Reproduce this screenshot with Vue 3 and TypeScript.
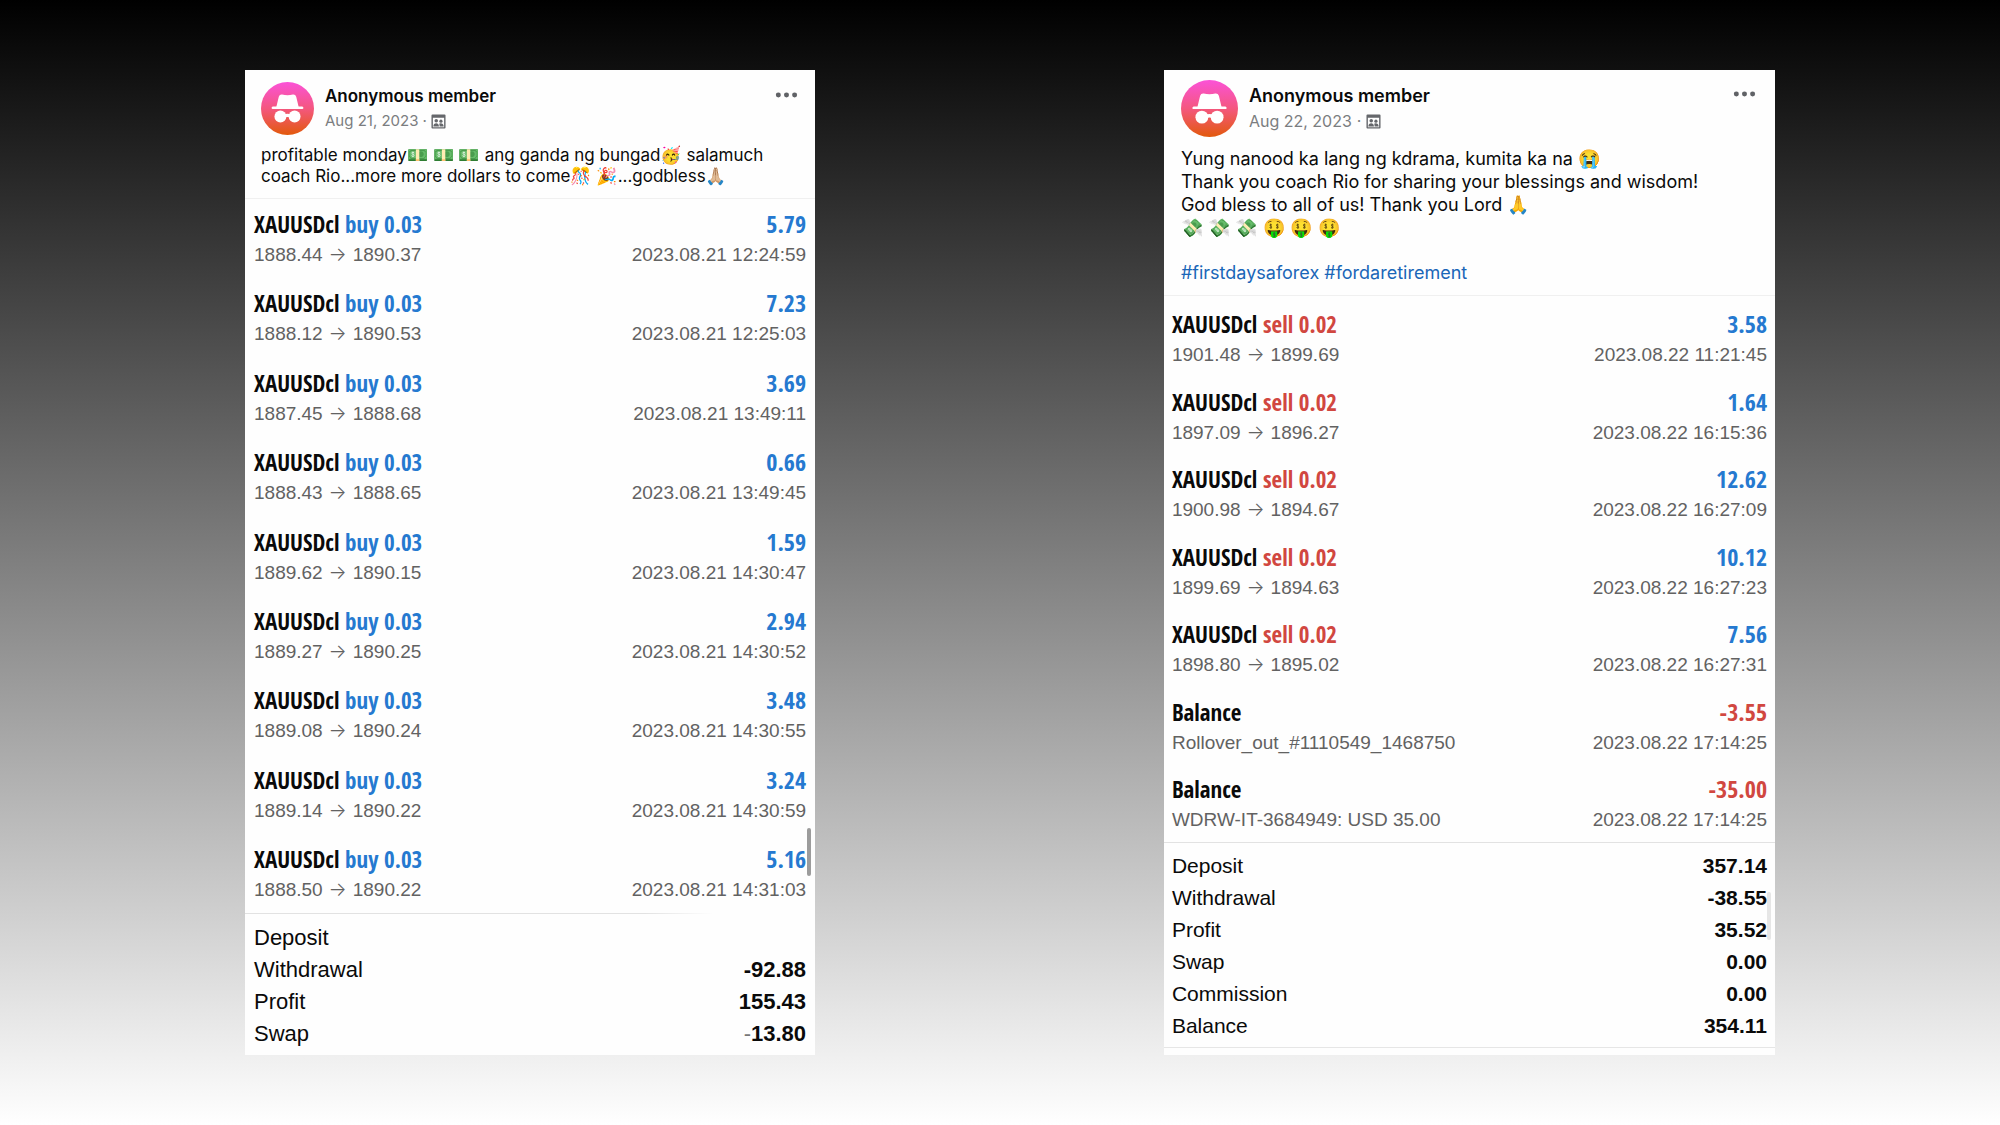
<script setup lang="ts">
interface Trade {
  name: string
  action?: string
  side?: 'buy' | 'sell'
  detail: string[]
  amount: string
  time: string
}

interface Total {
  label: string
  value: string
  faintSign?: boolean
}

interface Post {
  id: string
  variant: 'compact' | 'roomy'
  author: string
  date: string
  lines: string[]
  tags: string[]
  trades: Trade[]
  totals: Total[]
}

const buy = (from: string, to: string, amount: string, time: string): Trade => ({
  name: 'XAUUSDcl',
  action: 'buy 0.03',
  side: 'buy',
  detail: [from, to],
  amount,
  time: `2023.08.21 ${time}`,
})

const sell = (from: string, to: string, amount: string, time: string): Trade => ({
  name: 'XAUUSDcl',
  action: 'sell 0.02',
  side: 'sell',
  detail: [from, to],
  amount,
  time: `2023.08.22 ${time}`,
})

const posts: Post[] = [
  {
    id: 'aug21',
    variant: 'compact',
    author: 'Anonymous member',
    date: 'Aug 21, 2023',
    lines: [
      'profitable monday💵 💵 💵 ang ganda ng bungad🥳 salamuch',
      'coach Rio...more more dollars to come🎊 🎉...godbless🙏🏼',
    ],
    tags: [],
    trades: [
      buy('1888.44', '1890.37', '5.79', '12:24:59'),
      buy('1888.12', '1890.53', '7.23', '12:25:03'),
      buy('1887.45', '1888.68', '3.69', '13:49:11'),
      buy('1888.43', '1888.65', '0.66', '13:49:45'),
      buy('1889.62', '1890.15', '1.59', '14:30:47'),
      buy('1889.27', '1890.25', '2.94', '14:30:52'),
      buy('1889.08', '1890.24', '3.48', '14:30:55'),
      buy('1889.14', '1890.22', '3.24', '14:30:59'),
      buy('1888.50', '1890.22', '5.16', '14:31:03'),
    ],
    totals: [
      { label: 'Deposit', value: '' },
      { label: 'Withdrawal', value: '-92.88' },
      { label: 'Profit', value: '155.43' },
      { label: 'Swap', value: '-13.80', faintSign: true },
    ],
  },
  {
    id: 'aug22',
    variant: 'roomy',
    author: 'Anonymous member',
    date: 'Aug 22, 2023',
    lines: [
      'Yung nanood ka lang ng kdrama, kumita ka na 😭',
      'Thank you coach Rio for sharing your blessings and wisdom!',
      'God bless to all of us! Thank you Lord 🙏',
      '💸 💸 💸 🤑 🤑 🤑',
    ],
    tags: ['#firstdaysaforex', '#fordaretirement'],
    trades: [
      sell('1901.48', '1899.69', '3.58', '11:21:45'),
      sell('1897.09', '1896.27', '1.64', '16:15:36'),
      sell('1900.98', '1894.67', '12.62', '16:27:09'),
      sell('1899.69', '1894.63', '10.12', '16:27:23'),
      sell('1898.80', '1895.02', '7.56', '16:27:31'),
      { name: 'Balance', detail: ['Rollover_out_#1110549_1468750'], amount: '-3.55', time: '2023.08.22 17:14:25' },
      { name: 'Balance', detail: ['WDRW-IT-3684949: USD 35.00'], amount: '-35.00', time: '2023.08.22 17:14:25' },
    ],
    totals: [
      { label: 'Deposit', value: '357.14' },
      { label: 'Withdrawal', value: '-38.55' },
      { label: 'Profit', value: '35.52' },
      { label: 'Swap', value: '0.00' },
      { label: 'Commission', value: '0.00' },
      { label: 'Balance', value: '354.11' },
    ],
  },
]

const isNegative = (value: string): boolean => value.startsWith('-')
const digits = (value: string): string => value.replace('-', '')
</script>

<template>
  <main class="board">
    <article v-for="post in posts" :key="post.id" class="card" :class="post.variant">
      <header class="head">
        <svg class="avatar" viewBox="0 0 56 56" aria-hidden="true">
          <defs>
            <linearGradient :id="`sunset-${post.id}`" x1="0" y1="0" x2="0" y2="1">
              <stop offset="0" stop-color="#fb52d8" />
              <stop offset="0.5" stop-color="#f4577f" />
              <stop offset="1" stop-color="#e2590c" />
            </linearGradient>
          </defs>
          <circle cx="28" cy="28" r="28" :fill="`url(#sunset-${post.id})`" />
          <g fill="#fff">
            <path d="M16.500 25 L18.800 15.500 Q19.600 13 22.300 13.300 Q28 14.800 33.700 13.300 Q36.400 13 37.200 15.500 L39.500 25 L39.800 26 H43.500 Q44.800 26.200 44.800 27.400 Q44.800 28.600 43.500 28.600 H12.500 Q11.200 28.600 11.200 27.400 Q11.200 26.200 12.500 26 H16.200 Z" />
            <circle cx="20.500" cy="36.500" r="6.300" />
            <circle cx="35.500" cy="36.500" r="6.300" />
            <path d="M24 34.500 Q28 32.500 32 34.500 V38 Q28 35.800 24 38 Z" />
          </g>
        </svg>
        <div class="who">
          <h2 class="author">{{ post.author }}</h2>
          <p class="meta">
            <time>{{ post.date }}</time>
            <span>·</span>
            <svg class="group" viewBox="0 0 16 16" aria-label="Group">
              <path fill="#65676b" fill-rule="evenodd" d="M1.500 0.500h13a1 1 0 0 1 1 1v13a1 1 0 0 1-1 1h-13a1 1 0 0 1-1-1v-13a1 1 0 0 1 1-1zM2 4v10h12V4z" />
              <circle cx="5.600" cy="7.200" r="1.900" fill="#65676b" />
              <circle cx="10.600" cy="7.600" r="1.700" fill="#65676b" />
              <path fill="#65676b" d="M2.500 13.200c0-4.400 6-4.400 6 0zM9.200 13.200c0-1.200-.2-2-.6-2.700 1.700-1.300 4.900-.4 4.900 2.700z" />
            </svg>
          </p>
        </div>
        <button class="more" type="button" aria-label="More options">
          <svg viewBox="0 0 24 6" aria-hidden="true">
            <circle cx="3.500" cy="3" r="2.600" />
            <circle cx="12" cy="3" r="2.600" />
            <circle cx="20.500" cy="3" r="2.600" />
          </svg>
        </button>
      </header>

      <div class="message">
        <p v-for="line in post.lines" :key="line">{{ line }}</p>
        <p v-if="post.tags.length" class="tags">
          <template v-for="(tag, i) in post.tags" :key="tag">{{ i ? ' ' : '' }}<a href="#">{{ tag }}</a></template>
        </p>
      </div>

      <div class="history">
        <ul class="trades">
          <li v-for="trade in post.trades" :key="trade.detail[0]" class="trade">
            <div class="line deal">
              <span>{{ trade.name }} <span v-if="trade.action" :class="trade.side">{{ trade.action }}</span></span>
              <span class="amount" :class="isNegative(trade.amount) ? 'loss' : 'gain'"><span v-if="isNegative(trade.amount)" class="sign">-</span>{{ digits(trade.amount) }}</span>
            </div>
            <div class="line note">
              <span>{{ trade.detail[0] }}<template v-if="trade.detail[1]"><span class="arrow">→</span>{{ trade.detail[1] }}</template></span>
              <time>{{ trade.time }}</time>
            </div>
          </li>
        </ul>

        <dl class="totals">
          <div v-for="total in post.totals" :key="total.label" class="line total">
            <dt>{{ total.label }}</dt>
            <dd><span v-if="isNegative(total.value)" :class="{ faint: total.faintSign }">-</span>{{ digits(total.value) }}</dd>
          </div>
        </dl>
        <span class="thumb" aria-hidden="true"></span>
      </div>
    </article>
  </main>
</template>

<style>
body {
  margin: 0;
}
</style>

<style scoped>
.board {
  box-sizing: border-box;
  min-height: 100vh;
  padding: 70px 11.25% 70px 12.25%;
  display: grid;
  grid-template-columns: 570fr 611fr;
  column-gap: 22.8%;
  background: linear-gradient(#000, #fff);
}

.card {
  --avatar: 53px;
  --name: 17px;
  --date: 15px;
  --body: 17px;
  --body-line: 21px;
  --total: 22px;
  --inset: 9px;
  display: flex;
  flex-direction: column;
  background: #fefefe;
  color: #0a0a0a;
  font-family: Inter, "Noto Color Emoji", sans-serif;
}

.roomy {
  --avatar: 57px;
  --name: 18px;
  --date: 16px;
  --body: 18px;
  --body-line: 23px;
  --total: 21px;
  --inset: 8px;
}

h2,
p,
ul,
dl,
dd {
  margin: 0;
  padding: 0;
}

.head {
  display: flex;
  align-items: center;
  gap: 11px;
  padding: 12px 17px 10px 16px;
}

.roomy .head {
  padding: 10px 19px 10px 17px;
}

.avatar {
  width: var(--avatar);
  height: var(--avatar);
  flex: none;
}

.who {
  flex: 1;
}

.author {
  font-size: var(--name);
  font-weight: 600;
  line-height: 25px;
}

.meta {
  display: flex;
  align-items: center;
  gap: 4px;
  font-size: var(--date);
  line-height: 24px;
  color: #7b7d80;
}

.roomy .meta {
  gap: 5px;
  line-height: 26px;
}

.group {
  width: 15px;
  height: 15px;
}

.more {
  align-self: flex-start;
  padding: 10px 0;
  border: 0;
  background: none;
  line-height: 0;
}

.roomy .more {
  padding: 11px 0;
}

.more svg {
  width: 23px;
  height: 6px;
  fill: #606266;
}

.message {
  padding: 0 16px 11px;
  border-bottom: 1px solid #f0f0f0;
  font-size: var(--body);
  line-height: var(--body-line);
}

.roomy .message {
  padding: 0 17px 11px;
}

.tags {
  margin-top: 22px;
}

.tags a {
  color: #1a66b8;
  text-decoration: none;
}

.history {
  position: relative;
  flex: 1;
  display: flex;
  flex-direction: column;
}

.trades {
  flex: 1;
  display: flex;
  flex-direction: column;
  justify-content: space-between;
  padding: 9px var(--inset) 8px;
  list-style: none;
}

.roomy .trades {
  padding: 12px var(--inset) 7px;
}

.line {
  display: flex;
  justify-content: space-between;
}

.deal {
  font: 700 23px/32px "Open Sans Condensed", "Roboto Condensed", sans-serif;
}

.amount {
  font-size: 24px;
}

.buy,
.gain {
  color: #2579d0;
}

.sell,
.loss {
  color: #d14740;
}

.sign {
  font-weight: 400;
}

.note {
  font: 19px/30px "Liberation Sans", Arial, sans-serif;
  color: #626262;
}

.arrow {
  display: inline-block;
  width: 30px;
  font-family: Inter, sans-serif;
  font-weight: 300;
  text-align: center;
}

.totals {
  padding: 8px var(--inset) 5px;
  border-top: 1px solid #e2e2e2;
  font: var(--total)/32px "Liberation Sans", Arial, sans-serif;
}

.compact .totals {
  border-image: linear-gradient(to right, #e2e2e2 70%, #fefefe 82%) 1;
}

.roomy .totals {
  padding: 7px var(--inset) 5px;
  margin-bottom: 7px;
  border-bottom: 1px solid #e6e6e6;
}

.total dd {
  font-weight: 700;
}

.faint {
  font-weight: 400;
  color: #777;
}

.thumb {
  position: absolute;
  right: 4px;
  bottom: 179px;
  width: 4px;
  height: 48px;
  border-radius: 2px;
  background: #9c9c9c;
}

.roomy .thumb {
  bottom: 115px;
  background: #e6e6e6;
}
</style>
